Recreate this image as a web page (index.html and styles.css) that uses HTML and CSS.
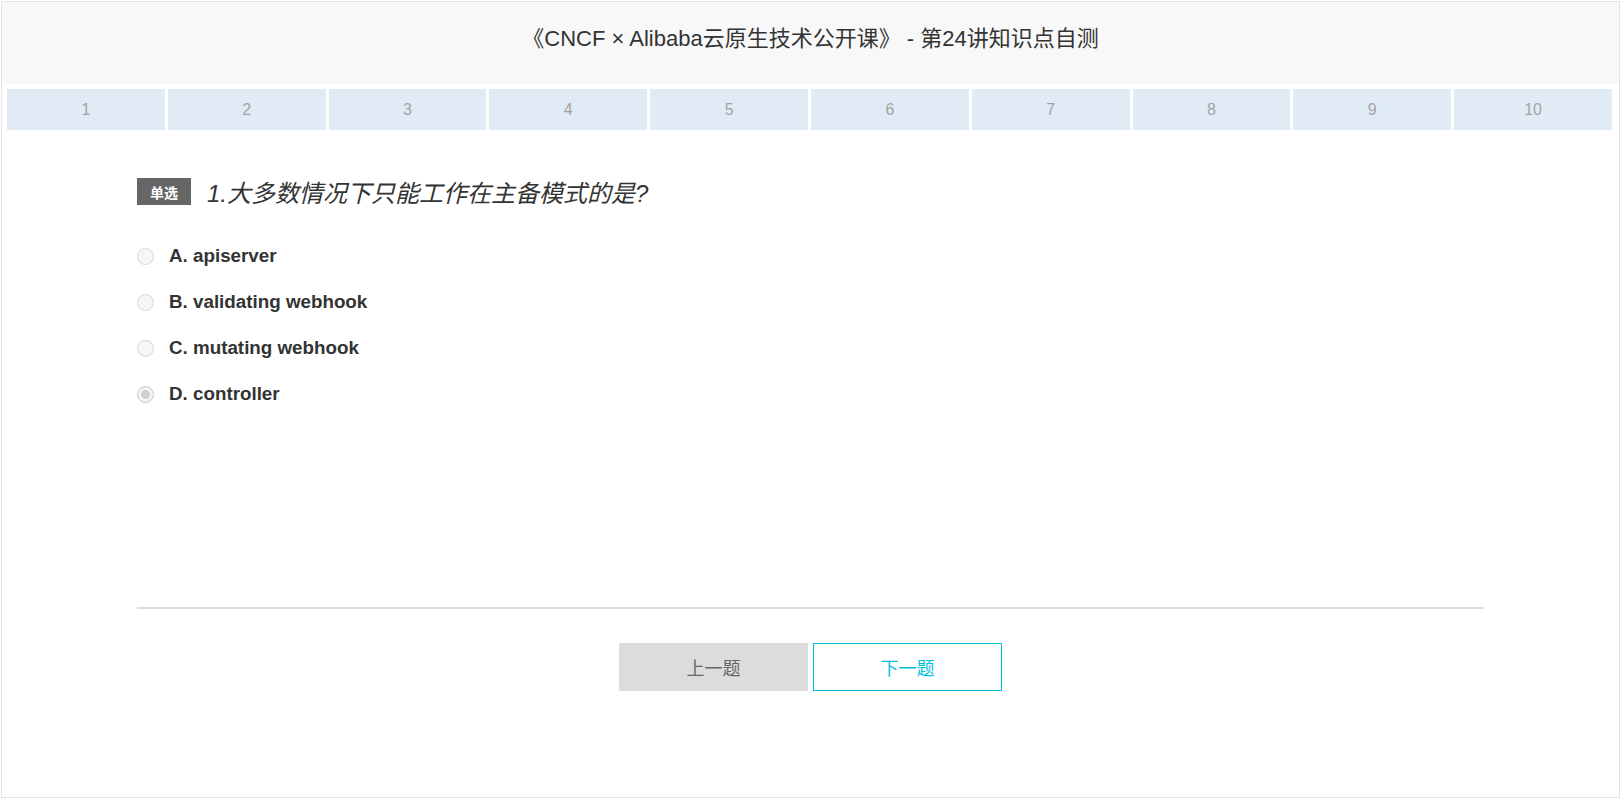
FILE: index.html
```html
<!DOCTYPE html>
<html lang="zh-CN">
<head>
<meta charset="utf-8">
<title>知识点自测</title>
<link rel="stylesheet" href="styles.css">
</head>
<body>
<div class="page">
  <header class="header">
    <h1 class="title">《CNCF × Alibaba云原生技术公开课》 - 第24讲知识点自测</h1>
  </header>
  <nav class="tabs">
    <div class="tab">1</div>
    <div class="tab">2</div>
    <div class="tab">3</div>
    <div class="tab">4</div>
    <div class="tab">5</div>
    <div class="tab">6</div>
    <div class="tab">7</div>
    <div class="tab">8</div>
    <div class="tab">9</div>
    <div class="tab">10</div>
  </nav>
  <main class="quiz">
    <section class="quiz-body">
      <div class="question">
        <span class="badge">单选</span>
        <span class="question-text">1.大多数情况下只能工作在主备模式的是?</span>
      </div>
      <ul class="options">
        <li class="option"><span class="radio"></span><span class="option-text">A. apiserver</span></li>
        <li class="option"><span class="radio"></span><span class="option-text">B. validating webhook</span></li>
        <li class="option"><span class="radio"></span><span class="option-text">C. mutating webhook</span></li>
        <li class="option"><span class="radio checked"></span><span class="option-text">D. controller</span></li>
      </ul>
    </section>
    <div class="actions">
      <button class="btn btn-prev">上一题</button>
      <button class="btn btn-next">下一题</button>
    </div>
  </main>
</div>
</body>
</html>
```

FILE: styles.css
```css
* {
  box-sizing: border-box;
}

html, body {
  margin: 0;
  padding: 0;
  background: #fff;
}

body {
  font-family: "Liberation Sans", "Noto Sans CJK SC", sans-serif;
  color: #333;
}

.page {
  margin: 1px 0 0 1px;
  width: 1619px;
  height: 797px;
  border: 1px solid #e3e3e3;
  background: #fff;
}

.header {
  height: 82px;
  background: #f8f8f8;
  display: flex;
  align-items: center;
  justify-content: center;
  padding-bottom: 9px;
}

.title {
  margin: 0;
  font-size: 22px;
  font-weight: normal;
  color: #333;
  line-height: 1;
}

.tabs {
  margin-top: 5px;
  padding: 0 7px 0 5px;
  display: grid;
  grid-template-columns: repeat(10, 1fr);
  column-gap: 3px;
}

.tab {
  height: 41px;
  background: #e1ebf5;
  color: #a3a3a3;
  font-size: 16px;
  display: flex;
  align-items: center;
  justify-content: center;
}

.quiz {
  width: 1347px;
  margin: 0 auto;
}

.quiz-body {
  height: 479px;
  padding-top: 48px;
  border-bottom: 2px solid #dcdcdc;
}

.question {
  display: flex;
  align-items: center;
  height: 27px;
}

.badge {
  width: 54px;
  height: 27px;
  background: #666;
  color: #fff;
  font-size: 14px;
  font-weight: bold;
  display: flex;
  align-items: center;
  justify-content: center;
  margin-right: 16px;
}

.question-text {
  font-size: 24px;
  font-style: italic;
  color: #333;
}

.options {
  list-style: none;
  margin: 28px 0 0;
  padding: 0;
}

.option {
  height: 46px;
  display: flex;
  align-items: center;
}

.radio {
  width: 17px;
  height: 17px;
  border-radius: 50%;
  border: 1px solid #d6d6d6;
  background: #f6f6f6;
  margin-right: 15px;
  flex: none;
}

.radio.checked {
  background: #cfcfcf;
  box-shadow: inset 0 0 0 3px #f4f4f4;
  border-color: #cfcfcf;
}

.option-text {
  font-size: 18.8px;
  font-weight: bold;
  color: #333;
}

.actions {
  margin-top: 34px;
  display: flex;
  justify-content: center;
  gap: 5px;
}

.btn {
  width: 189px;
  height: 48px;
  font-family: "Liberation Sans", "Noto Sans CJK SC", sans-serif;
  font-size: 18px;
  border: 1px solid transparent;
  padding: 0;
  cursor: pointer;
}

.btn-prev {
  background: #dcdcdc;
  border-color: #dcdcdc;
  color: #666;
}

.btn-next {
  background: #fff;
  border-color: #00c1de;
  color: #00c1de;
}
```
